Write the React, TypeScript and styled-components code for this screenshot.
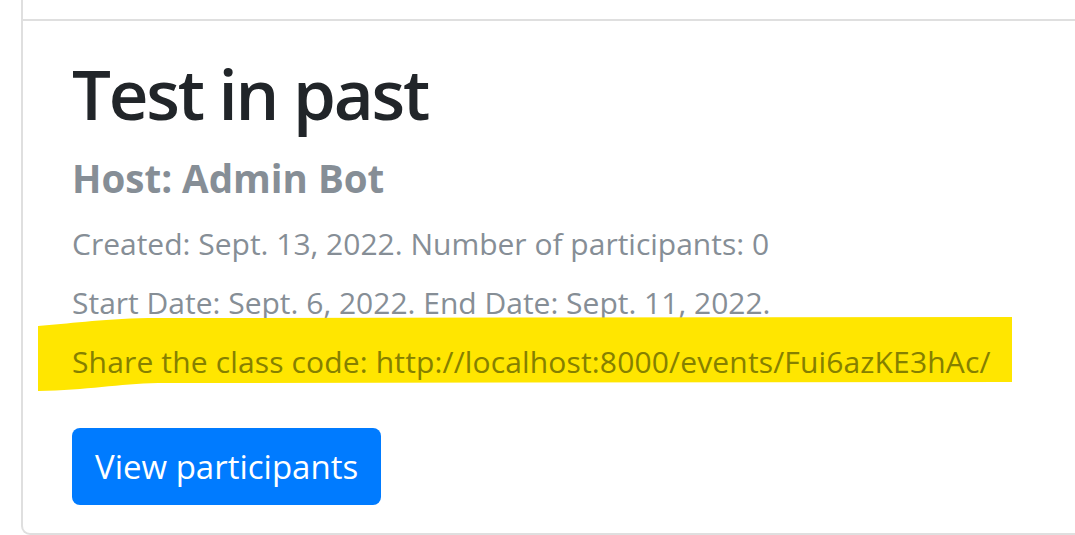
import React from "react";
import styled, { createGlobalStyle } from "styled-components";

const GlobalStyle = createGlobalStyle`
  html, body {
    margin: 0;
    padding: 0;
    background: #fff;
    overflow: hidden;
  }
  body {
    font-family: "Open Sans", "Noto Sans", "Liberation Sans", sans-serif;
  }
`;

const Page = styled.div`
  width: 1075px;
  height: 535px;
  overflow: hidden;
  padding-left: 21px;
  box-sizing: border-box;
`;

const Card = styled.div`
  width: 1120px;
  height: 535px;
  box-sizing: border-box;
  border: 2px solid #dfdfdf;
  border-top: none;
  border-radius: 0 0 9px 9px;
  background: #fff;
`;

const CardHeader = styled.div`
  height: 19px;
  border-bottom: 2px solid #dfdfdf;
`;

const CardBody = styled.div`
  padding: 30px 0 0 49px;
  display: flex;
  flex-direction: column;
  align-items: flex-start;
`;

const Title = styled.h1`
  margin: 0 0 20px;
  font-size: 69px;
  font-weight: 600;
  line-height: 84px;
  color: #212529;
  letter-spacing: -2.2px;
`;

const Host = styled.h5`
  margin: 0 0 21px;
  font-size: 38.5px;
  font-weight: 700;
  line-height: 46px;
  color: #868e96;
`;

const Info = styled.p<{ $marked?: boolean }>`
  position: relative;
  margin: 0 0 16px;
  font-size: 30px;
  line-height: 43px;
  color: ${(p) => (p.$marked ? "#858000" : "#868e96")};
`;

const InfoText = styled.span`
  position: relative;
  letter-spacing: 0.15px;
`;

const Marker = styled.svg`
  position: absolute;
  left: -34px;
  top: -24px;
  width: 974px;
  height: 76px;
`;

const Button = styled.button`
  margin-top: 29px;
  height: 77px;
  padding: 0 23px;
  border: none;
  border-radius: 8px;
  background: #007bff;
  color: #fff;
  font-family: inherit;
  font-size: 33px;
  line-height: 77px;
  cursor: pointer;
`;

const App = () => {
  return (
    <>
      <GlobalStyle />
      <Page>
        <Card>
          <CardHeader />
          <CardBody>
            <Title>Test in past</Title>
            <Host>Host: Admin Bot</Host>
            <Info>Created: Sept. 13, 2022. Number of participants: 0</Info>
            <Info>Start Date: Sept. 6, 2022. End Date: Sept. 11, 2022.</Info>
            <Info $marked>
              <Marker viewBox="0 0 974 76" preserveAspectRatio="none">
                <path
                  d="M0 10 C30 8 60 3 110 2 L974 1 L974 66 L120 67 C80 68 50 74 0 75 Z"
                  fill="#ffe600"
                />
              </Marker>
              <InfoText>
                Share the class code: http://localhost:8000/events/Fui6azKE3hAc/
              </InfoText>
            </Info>
            <Button type="button">View participants</Button>
          </CardBody>
        </Card>
      </Page>
    </>
  );
};

export default App;
